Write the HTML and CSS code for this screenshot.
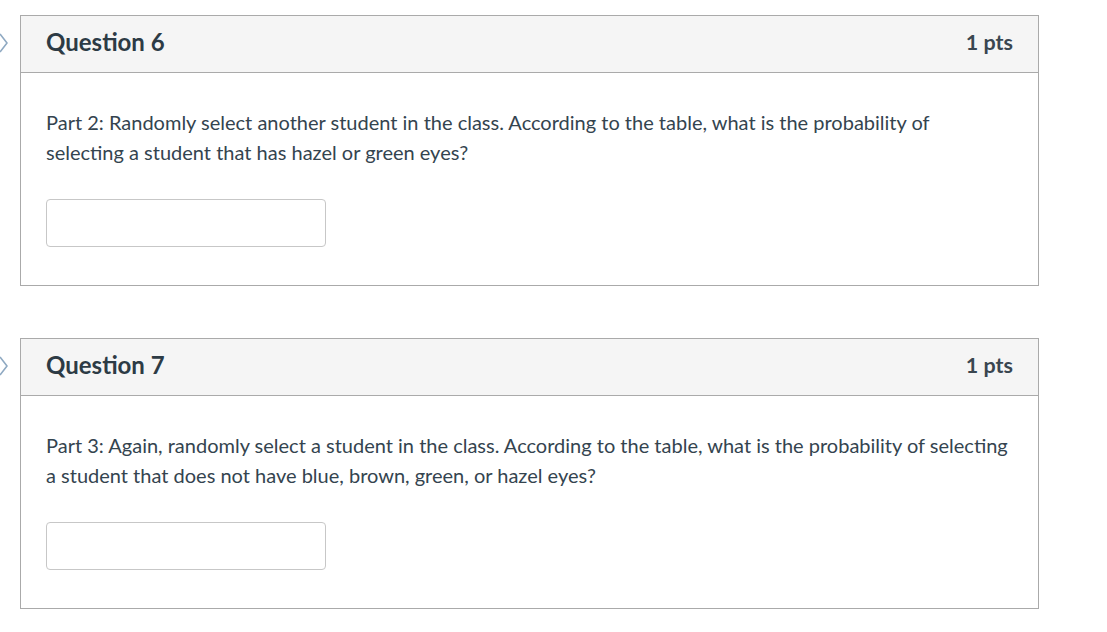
FILE: index.html
```html
<!DOCTYPE html>
<html>
<head>
<meta charset="utf-8">
<link rel="stylesheet" href="styles.css">
</head>
<body>
<div class="page">
  <div class="qrow">
    <div class="marker">
      <svg width="10" height="22" viewBox="1 0 10 22"><polyline points="1,2 8,11 1,20" fill="none" stroke="#8fa9c2" stroke-width="1.6" stroke-linejoin="round"/></svg>
    </div>
    <div class="card">
      <div class="card-head">
        <span class="q-title">Question 6</span>
        <span class="q-pts">1 pts</span>
      </div>
      <div class="card-body">
        <p class="q-text">Part 2: Randomly select another student in the class. According to the table, what is the probability of selecting a student that has hazel or green eyes?</p>
        <input class="answer" type="text">
      </div>
    </div>
  </div>
  <div class="qrow">
    <div class="marker">
      <svg width="10" height="22" viewBox="1 0 10 22"><polyline points="1,2 8,11 1,20" fill="none" stroke="#8fa9c2" stroke-width="1.6" stroke-linejoin="round"/></svg>
    </div>
    <div class="card">
      <div class="card-head">
        <span class="q-title">Question 7</span>
        <span class="q-pts">1 pts</span>
      </div>
      <div class="card-body">
        <p class="q-text">Part 3: Again, randomly select a student in the class. According to the table, what is the probability of selecting a student that does not have blue, brown, green, or hazel eyes?</p>
        <input class="answer" type="text">
      </div>
    </div>
  </div>
</div>
</body>
</html>
```
FILE: styles.css
```css
html, body {
  margin: 0;
  padding: 0;
  background: #ffffff;
}
body {
  font-family: Lato, "Liberation Sans", sans-serif;
  color: #2d3b45;
}
.page {
  display: flex;
  flex-direction: column;
  gap: 52px;
  padding-top: 15px;
  width: 1039px;
}
.qrow {
  display: flex;
  align-items: flex-start;
}
.marker {
  width: 20px;
  flex: none;
  padding-top: 17px;
}
.marker svg {
  display: block;
}
.card {
  flex: 1;
  border: 1px solid #aaaaaa;
  box-sizing: border-box;
}
.card-head {
  display: flex;
  justify-content: space-between;
  align-items: center;
  background: #f5f5f5;
  border-bottom: 1px solid #aaaaaa;
  padding: 0 25px 5px 25px;
  box-sizing: border-box;
  height: 57px;
}
.q-title {
  font-size: 24px;
  font-weight: 700;
  color: #2d3b45;
}
.q-pts {
  font-size: 21.5px;
  font-weight: 700;
  color: #3a4650;
}
.card-body {
  padding: 34px 26px 38px 25px;
}
.q-text {
  margin: 0 0 32px 0;
  font-size: 20px;
  line-height: 30px;
  color: #34444f;
}
.answer {
  display: block;
  width: 280px;
  height: 48px;
  box-sizing: border-box;
  border: 1px solid #c7c7c7;
  border-radius: 4px;
  margin: 0;
  background: #fff;
}
```
